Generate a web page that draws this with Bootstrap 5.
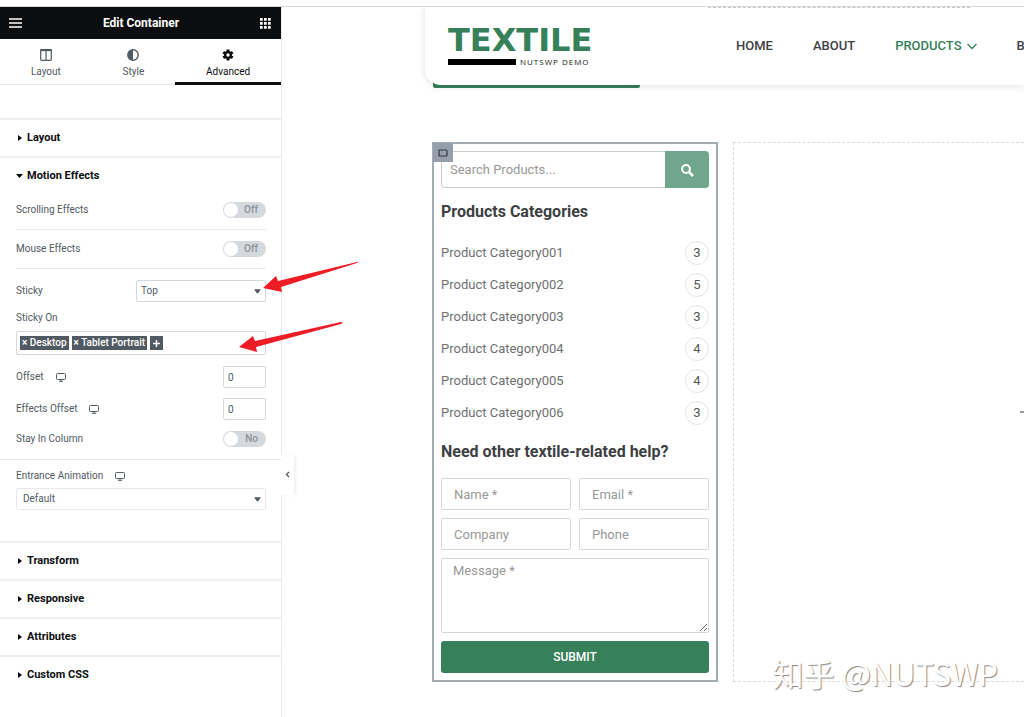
<!DOCTYPE html>
<html lang="en">
<head>
<meta charset="utf-8">
<meta name="viewport" content="width=device-width, initial-scale=1">
<title>Edit Container</title>
<link href="https://cdn.jsdelivr.net/npm/bootstrap@5.3.0/dist/css/bootstrap.min.css" rel="stylesheet">
<style>
body{font-family:Roboto,"Liberation Sans",sans-serif;font-size:13px;color:#6d6f71;background:#fff;overflow-x:hidden}
.topline{height:7px;border-bottom:1px solid #d5d8dc}
/* editor panel */
.panel{width:282px;border-right:1px solid #e9ebed;font-size:10px;line-height:16px;color:#515962}
.panel-head{height:32px;background:#0c0d0e;color:#fff;font-size:12px;padding:0 10px 0 9px}
.panel-tabs{height:46px;border-bottom:1px solid #e6e8ea;margin-bottom:33px}
.tab-btn{background:none;border:0;border-bottom:3px solid transparent;margin-bottom:-1px;padding:8px 0 0;color:#515962;line-height:16px}
.tab-btn svg{display:block;margin:0 auto 3px}
.tab-btn.active{color:#0c0d0e;border-bottom-color:#0c0d0e}
.sect{border-top:2px solid #eceef0}
.sect-head{height:36px;width:100%;background:none;border:0;padding:0 0 0 16px;font-size:11px;font-weight:700;color:#0c0d0e;text-align:left;gap:3px}
.sect-body{padding:0 15px 31px 16px}
.ctl{display:flex;align-items:center;justify-content:space-between;position:relative}
.ruled{border-bottom:1px solid #e6e8ea}
.switch{position:relative;width:43px;height:16px}
.switch input{appearance:none;display:block;width:43px;height:16px;border-radius:8px;background:#d5d8dc;margin:0;padding:1px}
.switch input::before{content:"";display:block;width:14px;height:14px;border-radius:50%;background:#fff}
.switch span{position:absolute;right:8px;top:0;color:#8c939c;font-weight:500}
.panel .form-select,.panel .form-control{height:22px;min-height:0;padding:0 4px;font-size:10px;line-height:16px;color:#515962;border:1px solid #d5d8dc;border-radius:2px}
.panel .form-select{background-image:url("data:image/svg+xml,%3Csvg xmlns='http://www.w3.org/2000/svg' viewBox='0 0 8 5'%3E%3Cpath d='M1 0h6q1 0 .4.9L4.6 4.4q-.6.6-1.2 0L.6.9Q0 0 1 0z' fill='%23515962'/%3E%3C/svg%3E");background-size:7px 5px;background-position:right 4px center}
.w-half{width:130px}.w-num{width:43px !important}
.panel .sel-soft{border-color:#e6e8ea;padding-left:6px}
.tagbox{height:24px;border:1px solid #d5d8dc;border-radius:2px;padding:0 3px;gap:3px;margin-top:5px;position:relative}
.tag{background:#515962;color:#fff;font-weight:500;border:0;height:14px;line-height:14px;padding:0 2px;white-space:nowrap}
.mt-a{margin-top:11px}.mt-b{margin-top:8px}.mt-c{margin-top:4px}
.full-rule{margin:12px -15px 0 -16px;height:1px;background:#e6e8ea}
.collapser{position:absolute;left:281px;top:448px;width:13px;height:40px;background:#fff;border:0;border-radius:0 3px 3px 0;box-shadow:2px 0 3px #00000010;padding:0 0 2px;z-index:2}
.arrow-note{position:absolute;z-index:3;pointer-events:none}
.arrow-one{left:247px;top:-19px}.arrow-two{left:222px;top:-10px}
/* site preview */
.preview{min-width:0;overflow:hidden}
.site-head{height:78px;margin-left:143px;border-radius:0 0 0 16px;box-shadow:0 1px 8px #00000020;background:#fff;padding-left:23px;position:relative;z-index:1;white-space:nowrap}
.behind{width:262px;height:1px;margin-left:426px;border-top:1px dashed #c4c6c8;position:absolute;top:0;z-index:2}
.logo{width:148px;margin-right:140px;color:#36805a;text-decoration:none}
.logo-word{font:700 32px/28px "DejaVu Sans",sans-serif;color:#36805a}
.logo-sub{font:500 8px/8px "Open Sans",sans-serif;letter-spacing:1px;color:#222}
.logo-bar{width:68px;height:6px;background:#000}
.site-nav{gap:40px;font-size:13px;font-weight:500}
.site-nav a{color:#3f4144;text-decoration:none}
.site-nav a.current{color:#36805a}
.green-rule{width:207px;height:8px;margin:-5px 0 0 151px;background:#36805a;border-radius:0 0 2px 2px}
.stage{margin:54px 0 36px 150px;gap:15px}
.shop-side{width:286px;border:2px solid #a3acb2;padding:7px;position:relative}
.grip{position:absolute;left:-1px;top:-1px;width:20px;height:19px;background:#959fab;border:0;padding:0;z-index:6;line-height:0}
.search-row .form-control{height:37px;border-color:#ccc;border-radius:4px 0 0 4px;padding:0 8px;font-size:13px}
.search-row .btn{width:44px;background:#70a68b;color:#fff;border:0;border-radius:0 4px 4px 0;padding:0}
.side-title{font-size:16px;line-height:24px;font-weight:700;color:#3d3f42;margin:0}
.t-one{margin-top:12px}.t-two{margin-top:15px}
.cats{margin:17px 0 0;gap:8px}
.cats a{color:#6d6f71;text-decoration:none}
.count{width:24px;height:24px;border:1px solid #e4e4e4;border-radius:50%;line-height:22px;text-align:center;color:#55585b}
.ask{margin-top:14px;display:grid;grid-template-columns:1fr 1fr;gap:8px}
.ask .form-control{height:32px;border-color:#d8d8d8;border-radius:2px;padding:0 12px;font-size:13px}
.ask textarea.form-control{height:75px;padding:2px 11px;grid-column:span 2;min-height:0}
.ask .btn{grid-column:span 2;height:32px;background:#36805a;color:#fff;border:0;border-radius:3px;padding:0;font-size:12px;font-weight:500}
.form-control::placeholder{color:#999}
.drop-zone{border:1px dashed #d8dadc;border-right:0}
.stamp{position:absolute;right:26px;bottom:25px;font:400 31px/40px "Noto Sans CJK SC",sans-serif;color:#fff;text-shadow:1px 1px 1px #888;white-space:nowrap;z-index:4}
</style>
</head>
<body>
<div class="d-flex flex-column min-vh-100">
<div class="topline"></div>
<div class="d-flex flex-grow-1 position-relative">
<aside class="panel flex-shrink-0 position-relative">
  <header class="panel-head d-flex align-items-center justify-content-between">
    <svg width="13" height="10" viewBox="0 0 13 10" stroke="#fff" stroke-width="1.600"><path d="M0 1h13M0 5h13M0 9h13"/></svg>
    <strong>Edit Container</strong>
    <svg width="11" height="11" viewBox="0 0 11 11" fill="#fff"><path d="M0 0h2.700v2.700H0zM4 0h2.700v2.700H4zM8 0h2.700v2.700H8zM0 4h2.700v2.700H0zM4 4h2.700v2.700H4zM8 4h2.700v2.700H8zM0 8h2.700v2.700H0zM4 8h2.700v2.700H4zM8 8h2.700v2.700H8z"/></svg>
  </header>
  <nav class="panel-tabs d-flex">
    <button class="tab-btn flex-fill"><svg width="12" height="12" viewBox="0 0 12 12" fill="none" stroke="#515962"><rect x=".7" y=".7" width="10.6" height="10.6" rx="1" stroke-width="1.2"/><path d="M0 1.3h12" stroke-width="1.6"/><path d="M6 1v10" stroke-width="1.2"/></svg>Layout</button>
    <button class="tab-btn flex-fill"><svg width="12" height="12" viewBox="0 0 12 12"><circle cx="6" cy="6" r="5.2" fill="none" stroke="#515962" stroke-width="1.4"/><path d="M6 1a5 5 0 0 0 0 10z" fill="#515962"/></svg>Style</button>
    <button class="tab-btn flex-fill active"><svg width="12" height="12" viewBox="0 0 12 12"><g stroke="#0c0d0e" stroke-width="3"><path d="M6 .6v10.8M1.3 3.3l9.4 5.4M1.3 8.7l9.4-5.4"/></g><circle cx="6" cy="6" r="4" fill="#0c0d0e"/><circle cx="6" cy="6" r="1.7" fill="#fff"/></svg>Advanced</button>
  </nav>
  <section class="sect"><button class="sect-head d-flex align-items-center"><svg width="8" height="8"><path d="M2 1l4 3-4 3z" fill="#0c0d0e"/></svg>Layout</button></section>
  <section class="sect">
    <button class="sect-head d-flex align-items-center" aria-expanded="true"><svg width="8" height="8"><path d="M0 2h7L3.500 6z" fill="#0c0d0e"/></svg>Motion Effects</button>
    <div class="sect-body">
      <div class="ctl ruled pb-1" style="height:36px"><label for="scr">Scrolling Effects</label><div class="switch"><input type="checkbox" id="scr"><span>Off</span></div></div>
      <div class="ctl ruled" style="height:39px"><label for="mou">Mouse Effects</label><div class="switch"><input type="checkbox" id="mou"><span>Off</span></div></div>
      <div class="ctl mt-a"><label for="sticky">Sticky</label><select id="sticky" class="form-select w-half"><option>Top</option></select>
        <svg class="arrow-note arrow-one" width="96" height="32"><path d="M0 27L13 15l2 5L94 1q3-1 0 1L18 26l1 5z" fill="#ee1c25"/></svg></div>
      <div class="mt-b">Sticky On</div>
      <div class="tagbox d-flex align-items-center">
        <button class="tag"><b>×</b> Desktop</button><button class="tag"><b>×</b> Tablet Portrait</button><button class="tag" aria-label="Add device"><svg class="d-block" width="9" height="9" stroke="#fff" stroke-width="1.5"><path d="M1 4.5h7M4.5 1v7"/></svg></button>
        <svg class="arrow-note arrow-two" width="106" height="32"><path d="M0 25L14 14l2 5L102 0q3 0 0 2L17 25l1 5z" fill="#ee1c25"/></svg>
      </div>
      <div class="ctl mt-a"><label for="off">Offset<svg class="ms-2 ps-1" width="14" height="9" viewBox="0 0 10 9" fill="none" stroke="#515962"><rect x=".5" y=".5" width="9" height="6" rx="1"/><path d="M3 8.3h4M5 6v2"/></svg></label><input id="off" class="form-control w-num" value="0"></div>
      <div class="ctl" style="margin-top:10px"><label for="eff">Effects Offset<svg class="ms-2 ps-1" width="14" height="9" viewBox="0 0 10 9" fill="none" stroke="#515962"><rect x=".5" y=".5" width="9" height="6" rx="1"/><path d="M3 8.3h4M5 6v2"/></svg></label><input id="eff" class="form-control w-num" value="0"></div>
      <div class="ctl mt-a"><label for="stay">Stay In Column</label><div class="switch"><input type="checkbox" id="stay"><span>No</span></div></div>
      <div class="full-rule"></div>
      <label class="d-block mt-b" for="ent">Entrance Animation<svg class="ms-2 ps-1" width="14" height="9" viewBox="0 0 10 9" fill="none" stroke="#515962"><rect x=".5" y=".5" width="9" height="6" rx="1"/><path d="M3 8.3h4M5 6v2"/></svg></label>
      <select id="ent" class="form-select sel-soft mt-c"><option>Default</option></select>
    </div>
  </section>
  <section class="sect"><button class="sect-head d-flex align-items-center"><svg width="8" height="8"><path d="M2 1l4 3-4 3z" fill="#0c0d0e"/></svg>Transform</button></section>
  <section class="sect"><button class="sect-head d-flex align-items-center"><svg width="8" height="8"><path d="M2 1l4 3-4 3z" fill="#0c0d0e"/></svg>Responsive</button></section>
  <section class="sect"><button class="sect-head d-flex align-items-center"><svg width="8" height="8"><path d="M2 1l4 3-4 3z" fill="#0c0d0e"/></svg>Attributes</button></section>
  <section class="sect"><button class="sect-head d-flex align-items-center"><svg width="8" height="8"><path d="M2 1l4 3-4 3z" fill="#0c0d0e"/></svg>Custom CSS</button></section>
  <button class="collapser" aria-label="Hide panel"><svg width="5" height="7" fill="none" stroke="#515962" stroke-width="1.3"><path d="M4 1L1.5 3.5 4 6"/></svg></button>
</aside>

<main class="preview flex-grow-1 position-relative">
  <div class="behind"></div>
  <header class="site-head d-flex align-items-center">
    <a class="logo flex-shrink-0" href="#">
      <div class="logo-word">TEXTILE</div>
      <div class="d-flex align-items-center gap-1 mt-1"><span class="logo-bar flex-shrink-0"></span><span class="logo-sub">NUTSWP DEMO</span></div>
    </a>
    <nav class="site-nav d-flex"><a href="#">HOME</a><a href="#">ABOUT</a><a href="#" class="current">PRODUCTS<svg class="ms-1" width="11" height="7" fill="none" stroke="#36805a" stroke-width="1.3"><path d="M1.5 1L6 5.500l4.500-4.500"/></svg></a><a href="#">B</a></nav>
  </header>
  <div class="green-rule"></div>
  <div class="stage d-flex">
    <div class="shop-side flex-shrink-0">
      <button class="grip" aria-label="Edit container"><svg width="10" height="8" fill="none" stroke="#33383f" stroke-width="1.2"><rect x="1" y="1" width="8" height="6" rx="1"/></svg></button>
      <form class="input-group search-row"><input class="form-control" type="search" aria-label="Search products" placeholder="Search Products..."><button type="button" class="btn" aria-label="Search"><svg width="13" height="13" fill="none" stroke="#fff"><circle cx="5" cy="5" r="3.900" stroke-width="2"/><path d="M8 8l4 4" stroke-width="2.500"/></svg></button></form>
      <h2 class="side-title t-one">Products Categories</h2>
      <ul class="cats list-unstyled d-flex flex-column">
        <li class="d-flex align-items-center justify-content-between"><a href="#">Product Category001</a><span class="count">3</span></li>
        <li class="d-flex align-items-center justify-content-between"><a href="#">Product Category002</a><span class="count">5</span></li>
        <li class="d-flex align-items-center justify-content-between"><a href="#">Product Category003</a><span class="count">3</span></li>
        <li class="d-flex align-items-center justify-content-between"><a href="#">Product Category004</a><span class="count">4</span></li>
        <li class="d-flex align-items-center justify-content-between"><a href="#">Product Category005</a><span class="count">4</span></li>
        <li class="d-flex align-items-center justify-content-between"><a href="#">Product Category006</a><span class="count">3</span></li>
      </ul>
      <h2 class="side-title t-two">Need other textile-related help?</h2>
      <form class="ask">
        <input class="form-control" aria-label="Name" placeholder="Name *"><input class="form-control" type="email" aria-label="Email" placeholder="Email *">
        <input class="form-control" aria-label="Company" placeholder="Company"><input class="form-control" type="tel" aria-label="Phone" placeholder="Phone">
        <textarea class="form-control" aria-label="Message" placeholder="Message *"></textarea>
        <button type="button" class="btn">SUBMIT</button>
      </form>
    </div>
    <div class="drop-zone flex-grow-1 d-flex align-items-center justify-content-end"><svg width="4" height="2"><path d="M0 1h4" stroke="#999" stroke-width="2"/></svg></div>
  </div>
  <div class="stamp">知乎 @NUTSWP</div>
</main>
</div>
</div>
<script src="https://cdn.jsdelivr.net/npm/bootstrap@5.3.0/dist/js/bootstrap.bundle.min.js"></script>
</body>
</html>
